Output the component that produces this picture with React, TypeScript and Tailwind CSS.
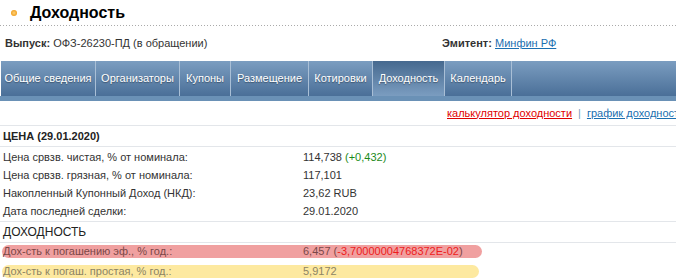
import React from "react";

type Tab = { label: string; w: string; active?: boolean };

const tabs: Tab[] = [
  { label: "Общие сведения", w: "w-[95px]" },
  { label: "Организаторы", w: "w-[84px]" },
  { label: "Купоны", w: "w-[51px]" },
  { label: "Размещение", w: "w-[78px]" },
  { label: "Котировки", w: "w-[64px]" },
  { label: "Доходность", w: "w-[72px]", active: true },
  { label: "Календарь", w: "w-[67px]" },
];

const priceRows: { label: string; value: React.ReactNode }[] = [
  {
    label: "Цена срвзв. чистая, % от номинала:",
    value: (
      <>
        114,738 <span className="text-[#1a8a1a]">(+0,432)</span>
      </>
    ),
  },
  { label: "Цена срвзв. грязная, % от номинала:", value: "117,101" },
  { label: "Накопленный Купонный Доход (НКД):", value: "23,62 RUB" },
  { label: "Дата последней сделки:", value: "29.01.2020" },
];

export default function App() {
  return (
    <div className="w-[676px] h-[280px] overflow-hidden bg-white text-[11px] text-[#333] font-['Liberation_Sans',Arial,sans-serif]">
      {/* title */}
      <div className="flex items-center h-[25px] pl-[11px]">
        <span className="w-[6px] h-[6px] rounded-full bg-[radial-gradient(circle,#ffd27a_0,#f0a020_70%)] mt-[1px]" />
        <h1 className="ml-[13px] text-[16px] font-bold text-black leading-none">Доходность</h1>
      </div>
      <div className="h-px bg-[repeating-linear-gradient(to_right,#aaa_0,#aaa_1px,transparent_1px,transparent_3px)]" />

      {/* issue row */}
      <div className="flex items-center h-[35px] pl-[5px]">
        <div className="w-[437px]">
          <b className="text-[#333]">Выпуск:</b> ОФЗ-26230-ПД (в обращении)
        </div>
        <div>
          <b className="text-[#333]">Эмитент:</b>{" "}
          <a className="text-[#1a6fb0] underline">Минфин РФ</a>
        </div>
      </div>

      {/* tabs */}
      <div className="flex h-[35px] ml-px bg-[linear-gradient(#7b9dc0,#4a6f98)]">
        {tabs.map((t) => (
          <div
            key={t.label}
            className={[
              "flex items-center justify-center border-r border-[#a9bfd6] text-white [text-shadow:0_1px_1px_rgba(0,0,0,0.35)]",
              t.w,
              t.active ? "bg-[linear-gradient(#46698f,#7b9dc0)]" : "",
            ].join(" ")}
          >
            {t.label}
          </div>
        ))}
      </div>
      <div className="h-[5px] bg-[#6a91b6]" />

      {/* links */}
      <div className="flex items-center h-[24px] pl-[447px] whitespace-nowrap">
        <a className="text-[#e00000] underline">калькулятор доходности</a>
        <span className="mx-[6px] text-[#7a9cc0]">|</span>
        <a className="text-[#1a6fb0] underline">график доходности</a>
      </div>
      <div className="h-px bg-[#e3e6ea]" />

      {/* price block */}
      <div className="flex items-center h-[20px] pl-[3px] font-bold text-[#222]">ЦЕНА (29.01.2020)</div>
      <div className="h-px bg-[#e3e6ea]" />
      <div className="py-px">
        {priceRows.map((r) => (
          <div key={r.label} className="flex items-center h-[18px]">
            <div className="w-[303px] pl-[3px]">{r.label}</div>
            <div>{r.value}</div>
          </div>
        ))}
      </div>
      <div className="h-px bg-[#e3e6ea]" />

      {/* yield block */}
      <div className="flex items-center h-[20px] pl-[3px] text-[12px] text-[#222]">ДОХОДНОСТЬ</div>
      <div className="h-px bg-[#e3e6ea]" />
      <div className="flex flex-col gap-[7px] pt-[2px] pl-[2px]">
        <div className="flex items-center h-[13px] w-[480px] rounded-full bg-[#f0a0a0] text-[#7a4848]">
          <div className="w-[301px] pl-px">Дох-сть к погашению эф., % год.:</div>
          <div>
            6,457 (<span className="text-[#ee1c1c]">-3,70000004768372E-02</span>)
          </div>
        </div>
        <div className="flex items-center h-[13px] w-[477px] rounded-full bg-[#fde9a0] text-[#8c8464]">
          <div className="w-[301px] pl-px">Дох-сть к погаш. простая, % год.:</div>
          <div>5,9172</div>
        </div>
      </div>
    </div>
  );
}
